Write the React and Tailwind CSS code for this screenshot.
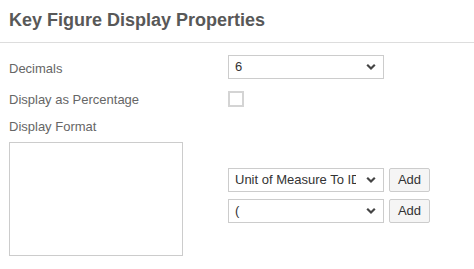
const Chevron = () => (
  <svg
    className="pointer-events-none absolute right-[8px] top-1/2 -translate-y-1/2"
    width="10"
    height="7"
    viewBox="0 0 10 7"
  >
    <path d="M1.2 1.3 L5 5 L8.8 1.3" fill="none" stroke="#444" strokeWidth="2.2" />
  </svg>
);

const Select = ({ value, options }) => (
  <div className="relative h-[24px] w-[156px]">
    <select
      defaultValue={value}
      className="h-full w-full appearance-none border border-[#cccccc] bg-white pl-[6px] pr-[27px] text-[13px] text-[#333] outline-none"
    >
      {options.map((o) => (
        <option key={o}>{o}</option>
      ))}
    </select>
    <Chevron />
  </div>
);

const AddButton = () => (
  <button className="h-[24px] w-[41px] rounded-[2px] border border-[#cccccc] bg-[#f5f5f5] text-[13px] text-[#333]">
    Add
  </button>
);

const App = () => {
  return (
    <div
      className="h-[269px] w-[474px] overflow-hidden bg-white text-[13px] text-[#666]"
      style={{ fontFamily: '"Liberation Sans", Arial, sans-serif' }}
    >
      <div className="h-[43px] border-b border-[#dddddd] pl-[9px] pt-[10px]">
        <h2 className="text-[18px] font-bold leading-[20px] text-[#585858]">
          Key Figure Display Properties
        </h2>
      </div>

      <div className="px-[9px] pt-[12px]">
        <div className="flex h-[24px] items-center">
          <label className="w-[219px] pt-[2px] leading-[15px]">Decimals</label>
          <Select value="6" options={["0", "1", "2", "3", "4", "5", "6"]} />
        </div>

        <div className="mt-[11px] flex h-[17px] items-center">
          <label className="w-[219px] pt-[1px] leading-[15px]">Display as Percentage</label>
          <input
            type="checkbox"
            className="m-0 h-[16px] w-[16px] appearance-none border-2 border-[#d4d4d4] bg-white"
          />
        </div>

        <div className="mt-[12px] leading-[15px]">Display Format</div>

        <div className="mt-[8px] flex">
          <textarea className="h-[114px] w-[174px] resize-none border border-[#cccccc] outline-none" />
          <div className="ml-[45px] mt-[26px] flex flex-col gap-[7px]">
            <div className="flex gap-[5px]">
              <Select
                value="Unit of Measure To ID"
                options={["Unit of Measure To ID", "Currency", "Scale"]}
              />
              <AddButton />
            </div>
            <div className="flex gap-[5px]">
              <Select value="(" options={["(", ")", "+", "-"]} />
              <AddButton />
            </div>
          </div>
        </div>
      </div>
    </div>
  );
};

export default App;
